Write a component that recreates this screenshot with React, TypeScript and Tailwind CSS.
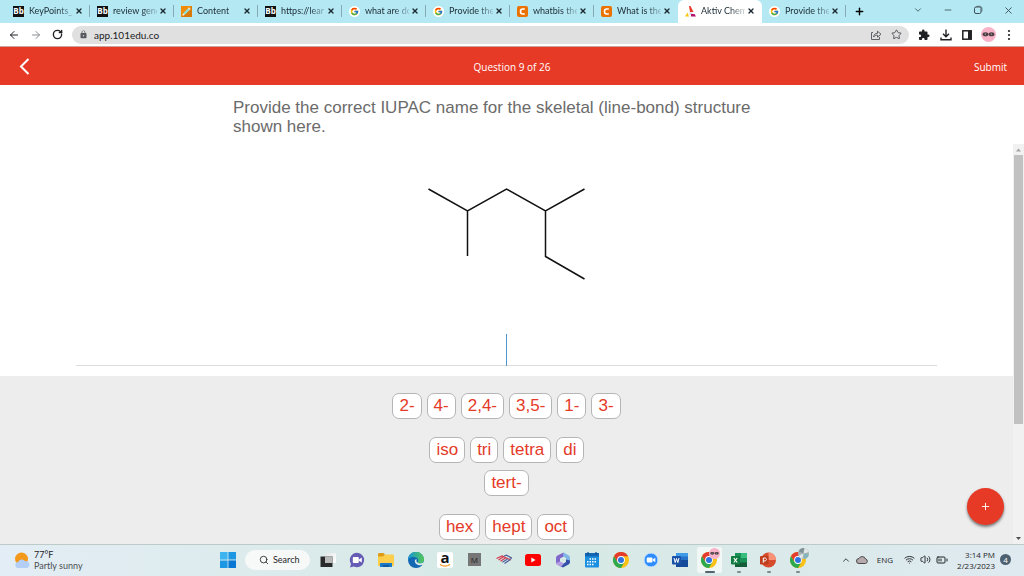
import type { ReactNode } from "react";
import { FcGoogle } from "react-icons/fc";
import { MdExtension, MdLock } from "react-icons/md";
import { ArrowLeft, ArrowRight, BatteryMedium, ChevronDown, ChevronUp, Minus, Plus, RotateCw, Search, Star, Volume2, Wifi, X } from "lucide-react";

const Blackboard = () => (
  <span className="flex size-[11px] shrink-0 items-center justify-center bg-[#111] text-[8px] font-bold text-white">Bb</span>
);

const Google = () => (
  <span className="flex size-[11px] shrink-0 items-center justify-center rounded-full bg-white">
    <FcGoogle size={9} />
  </span>
);

const Pencil = () => (
  <svg viewBox="0 0 11 11" className="size-[11px] shrink-0">
    <rect width="11" height="11" fill="#f08c0a" />
    <path d="M0 11 11 0v11z" fill="#d97b08" />
    <path d="M3 8 8 3" stroke="#8fe0dc" strokeWidth="2.4" />
    <path d="m7.4 1.800 1.800 1.800" stroke="#f7e3c0" strokeWidth="1.6" />
    <path d="M1.5 9.700 2 7.200l1.800 1.800z" fill="#fff" />
  </svg>
);

const Chegg = () => (
  <svg viewBox="0 0 11 11" className="size-[11px] shrink-0">
    <rect width="11" height="11" rx="2" fill="#eb7100" />
    <path d="M7.8 3H5.6C4.3 3 3.5 4 3.5 5.5S4.3 8 5.6 8h2.2" fill="none" stroke="#fff" strokeWidth="1.6" />
  </svg>
);

const Aktiv = () => (
  <svg viewBox="0 0 11 11" className="size-[11px] shrink-0">
    <path d="M4 0h1.500L8.500 6H5z" fill="#e8392b" />
    <path d="M0 10.5 2.500 6.500l1.500 4z" fill="#fbc712" />
    <path d="M4.500 6.500h3V9h-3z" fill="#d9d6ea" />
    <path d="M6 8h3.500l1.500 2.500H6z" fill="#b5126b" />
  </svg>
);

const tabs = [
  { title: "KeyPoints_C", icon: <Blackboard /> },
  { title: "review gene", icon: <Blackboard /> },
  { title: "Content", icon: <Pencil /> },
  { title: "https://lear", icon: <Blackboard /> },
  { title: "what are do", icon: <Google /> },
  { title: "Provide the", icon: <Google /> },
  { title: "whatbis the", icon: <Chegg /> },
  { title: "What is the", icon: <Chegg /> },
  { title: "Aktiv Chem", icon: <Aktiv />, active: true },
  { title: "Provide the", icon: <Google /> },
];

const groups = [
  ["2-", "4-", "2,4-", "3,5-", "1-", "3-"],
  ["iso", "tri", "tetra", "di", "tert-"],
  ["hex", "hept", "oct"],
];

function TabStrip() {
  return (
    <div className="flex h-[23px] items-stretch bg-[#b4e8f3] pl-[6px]">
      {tabs.map((tab, i) => (
        <div
          key={i}
          className={
            tab.active
              ? "flex w-[84px] items-center rounded-t-md bg-white pb-px pl-[7px]"
              : "flex w-[84px] items-center pb-px pl-[7px]"
          }
        >
          {tab.icon}
          <span className="ml-[5px] w-[44px] whitespace-nowrap font-['Lato','Open_Sans',sans-serif] text-[9px] text-[#20303a] [mask-image:linear-gradient(to_right,#000_65%,#0003)]">
            {tab.title}
          </span>
          <button aria-label="Close tab" className="ml-[2px] text-[#1b2a30]">
            <X size={8} strokeWidth={4} />
          </button>
          {!tab.active && i !== 7 && <span className="ml-auto h-3 w-px bg-[#86a9b3]" />}
        </div>
      ))}
      <button aria-label="New tab" className="ml-[8px]">
        <Plus size={11} strokeWidth={3} />
      </button>
      <div className="ml-auto flex items-center gap-[20px] pr-[10px] pb-[3px] text-[#3c4f56]">
        <button aria-label="Search tabs"><ChevronDown size={10} /></button>
        <button aria-label="Minimize"><Minus size={10} strokeWidth={2} /></button>
        <button aria-label="Restore">
          <svg viewBox="0 0 10 10" className="size-[10px]" fill="none" stroke="currentColor">
            <rect x="1.500" y="2" width="6.500" height="6.500" rx="1.500" />
            <path d="M3.500 1.300h3.200c1.400 0 2.200.8 2.200 2.200v3" strokeWidth=".7" />
          </svg>
        </button>
        <button aria-label="Close"><X size={11} strokeWidth={2} /></button>
      </div>
    </div>
  );
}

function Toolbar() {
  return (
    <div className="flex h-6 items-center border-b border-[#c9a39e] bg-white pr-[13px] pl-[8px] text-[#202124]">
      <button aria-label="Back"><ArrowLeft size={12} /></button>
      <button aria-label="Forward" className="ml-[10px] text-[#8a8d91]"><ArrowRight size={12} /></button>
      <button aria-label="Reload" className="ml-[10px]"><RotateCw size={11} strokeWidth={3} /></button>
      <div className="ml-[9px] flex h-[18px] flex-1 items-center rounded-full bg-[#e0e0e0] px-[7px]">
        <MdLock size={9} className="text-[#55585c]" />
        <input
          aria-label="Address"
          defaultValue="app.101edu.co"
          className="ml-[6px] min-w-0 flex-1 bg-transparent font-['Lato','Open_Sans',sans-serif] text-[10px] leading-[14px] outline-none"
        />
        <button aria-label="Share">
          <svg viewBox="0 0 12 12" className="size-3" fill="none" stroke="#5f6368">
            <path d="M3 3.500H1.500v7h8V8" />
            <path d="M3.500 8c.3-2.600 2-3.700 4-3.700V2.200l3.500 3-3.500 3V6.200c-1.700 0-3 .4-4 1.800z" />
          </svg>
        </button>
        <button aria-label="Bookmark" className="ml-[9px]"><Star size={11} color="#4a4d51" /></button>
      </div>
      <button aria-label="Extensions" className="ml-[9px]"><MdExtension size={12} /></button>
      <button aria-label="Downloads" className="ml-[10px]">
        <svg viewBox="0 0 12 12" className="size-3" fill="none" stroke="currentColor" strokeWidth="1.4">
          <path d="M6 .5v7M3 4.800 6 7.800 9 4.800M1 8.500v2.300h10V8.500" />
        </svg>
      </button>
      <button aria-label="Side panel" className="ml-[10px]">
        <svg viewBox="0 0 10 10" className="size-[10px]">
          <rect x=".8" y=".8" width="8.400" height="8.400" fill="none" stroke="currentColor" strokeWidth="1.500" />
          <path d="M6 1h3.500v8H6z" fill="currentColor" />
        </svg>
      </button>
      <button aria-label="Profile" className="ml-[9px]"><Avatar className="size-[15px]" /></button>
      <button aria-label="Menu" className="ml-[11px]">
        <svg viewBox="0 0 4 12" className="h-3 w-1" fill="currentColor">
          <circle cx="2" cy="2" r="1.100" />
          <circle cx="2" cy="6" r="1.100" />
          <circle cx="2" cy="10" r="1.100" />
        </svg>
      </button>
    </div>
  );
}

const Avatar = ({ className }: { className: string }) => (
  <svg viewBox="0 0 15 15" className={className}>
    <circle cx="7.500" cy="7.500" r="7.500" fill="#f8b3c9" />
    <ellipse cx="4.500" cy="7.300" rx="2.900" ry="2" fill="#4d4045" />
    <ellipse cx="10.500" cy="7.300" rx="2.900" ry="2" fill="#4d4045" />
    <circle cx="4.300" cy="7" r=".6" fill="#ddd" />
    <circle cx="10.300" cy="7" r=".6" fill="#ddd" />
  </svg>
);

function Molecule() {
  return (
    <svg viewBox="0 0 158 92" className="mx-auto h-[92px] w-[158px]" fill="none" stroke="#111" strokeWidth="1.500">
      <path d="M.5 1 39.500 23 78.500 1 117.500 23 156.500 1M39.500 23v45M117.500 23v45.500l39 22.500" />
    </svg>
  );
}

function Question() {
  return (
    <div className="flex min-h-0 flex-1 flex-col bg-white">
      <p className="mx-auto h-[59px] w-full max-w-[558px] shrink-0 pt-[13px] text-[17px] leading-[19px] text-[#6b6b6b]">
        Provide the correct IUPAC name for the skeletal (line-bond) structure shown here.
      </p>
      <div className="flex min-h-0 flex-1">
        <main className="flex min-w-0 flex-1 flex-col overflow-hidden">
          <div className="pt-[44px]">
            <Molecule />
          </div>
          <div className="relative mx-[76px] mt-[54px] mb-[10px] flex justify-center">
            <input aria-label="Answer" className="block h-8 w-full border-b border-[#dcdcdc] text-center outline-none" />
            <span className="absolute bottom-0 h-8 w-px bg-[#4f96cc]" />
          </div>
          <div className="flex flex-1 flex-col items-center gap-[18px] bg-[#ededed] pt-[17px]">
            {groups.map((group, i) => (
              <div key={i} className={i === 1 ? "flex max-w-[190px] flex-wrap justify-center gap-x-[5px] gap-y-[7px]" : "flex gap-[5px]"}>
                {group.map((part) => (
                  <button
                    key={part}
                    className="h-[26px] rounded-[7px] border border-[#b5b5b5] bg-white px-[6px] text-[17px] leading-[24px] text-[#e43a27]"
                  >
                    {part}
                  </button>
                ))}
              </div>
            ))}
          </div>
        </main>
        <div className="flex w-[11px] flex-col items-center bg-[#f1f1f1]">
          <svg viewBox="0 0 11 11" className="size-[11px] shrink-0" fill="#a3a3a3"><path d="m5.500 4.500 2.500 3H3z" /></svg>
          <div className="h-[269px] w-[9px] bg-[#c1c1c1]" />
          <svg viewBox="0 0 11 11" className="mt-auto size-[11px] shrink-0" fill="#505050"><path d="M5.500 7 8 4H3z" /></svg>
        </div>
      </div>
    </div>
  );
}

const Chrome = ({ className = "size-4" }: { className?: string }) => (
  <svg viewBox="0 0 16 16" className={className}>
    <circle cx="8" cy="8" r="8" fill="#fbc116" />
    <path d="M1.070 4A8 8 0 0 0 8 16l3.500-6L8 8 4.600 10z" fill="#2da94f" />
    <path d="M8 4.200h7.100L14.930 4A8 8 0 0 0 1.070 4l3.600 6z" fill="#e33b2e" />
    <circle cx="8" cy="8" r="3.900" fill="#fff" />
    <circle cx="8" cy="8" r="3" fill="#2f73e0" />
  </svg>
);

const TaskView = () => (
  <svg viewBox="0 0 16 16" className="size-4">
    <defs>
      <linearGradient id="tvBack" x2="1" y2="1">
        <stop stopColor="#e4e7e6" />
        <stop offset="1" stopColor="#fff" />
      </linearGradient>
    </defs>
    <path d="M5 1h11v10H5z" fill="url(#tvBack)" />
    <path d="M.5 4.500h12V15H.5z" fill="#2a2a2a" />
    <path d="M5 4.500h7.500V11H5z" fill="#b9bbba" />
  </svg>
);

const Chat = () => (
  <svg viewBox="0 0 16 16" className="size-4">
    <path d="M8 .8a7.200 7.200 0 1 1-3.200 13.700L1 15.500l1-3.600A7.200 7.200 0 0 1 8 .8z" fill="#665cb5" />
    <rect x="3.800" y="5" width="6" height="6" rx="1" fill="#fff" />
    <path d="m10 7.500 2.800-1.900v4.800L10 8.800z" fill="#fff" />
  </svg>
);

const Folder = () => (
  <svg viewBox="0 0 16 16" className="size-4">
    <path d="M0 2.500C0 1.500.5 1 1.500 1h4L7 2.500 5.500 5H0z" fill="#dc9c17" />
    <path d="M0 4.500h5L7 2.500h7.500c1 0 1.500.5 1.500 1.500v10H0z" fill="#fbcf4c" />
    <path d="M2 15v-3c0-.6.400-1 1-1h10c.600 0 1 .4 1 1v3z" fill="#1978c9" />
    <path d="M5 13h6v2H5z" fill="#115a9e" />
  </svg>
);

const Edge = () => (
  <svg viewBox="0 0 16 16" className="size-4">
    <defs>
      <linearGradient id="edgeTop" x2="1">
        <stop stopColor="#1795d5" />
        <stop offset="1" stopColor="#54c957" />
      </linearGradient>
    </defs>
    <circle cx="8" cy="8" r="8" fill="#1268b3" />
    <path d="M0 8a8 8 0 0 1 16-.5c0 2.500-1.800 4-4 4-1.500 0-2.500-.5-2.500-1.200 0-.4.700-.9.700-1.900C10.200 6 8 5 5.500 5 2.500 5 .5 6.500 0 8z" fill="url(#edgeTop)" />
    <path d="M7 7.800c-.8 3 1.500 5.500 5 5.500 1.200 0 2.300-.3 3.200-1-.3.700-.7 1.200-1.200 1.700l2-3v-1c-1.500 1.600-5.500 2-7 .3-.8-.9-.7-2 0-3z" fill="#dcebe8" />
  </svg>
);

const Amazon = () => (
  <span className="flex size-4 flex-col items-center rounded-xs bg-white font-bold">
    <span className="h-3 text-[15px] leading-[10px] text-[#111]">a</span>
    <svg viewBox="0 0 12 3" className="h-[3px] w-3" fill="none" stroke="#f79b1e" strokeWidth="1.300">
      <path d="M1 .5c3 2 7 2 10 0" />
    </svg>
  </span>
);

const Letter = () => (
  <span className="flex size-4 items-center justify-center">
    <span className="flex size-[13px] items-center justify-center bg-[#767676] text-[8px] text-[#222]">M</span>
  </span>
);

const Bank = () => (
  <svg viewBox="0 0 16 16" className="size-4" fill="none" strokeWidth="1.200">
    <path d="M.5 6.500 6 4l9 4" stroke="#d23b50" />
    <path d="m2.500 8 5-3.300M4.500 9.200l5-3.300" stroke="#d23b50" />
    <path d="m6.500 10.300 5-3.300M8.500 11.500l5.500-3.700" stroke="#4d5f9c" />
    <path d="m8 4 2.500-.8 5 2.800-1.500 1" stroke="#4d5f9c" />
  </svg>
);

const YouTube = () => (
  <svg viewBox="0 0 16 12" className="h-3 w-4">
    <rect width="16" height="12" rx="2.500" fill="#f00" />
    <path d="m6.300 3.500 4.200 2.500-4.200 2.500z" fill="#fff" />
  </svg>
);

const Office = () => (
  <svg viewBox="0 0 16 16" className="size-4">
    <path d="M8.500.500 2.500 3.500C1.500 4 1 5 1 6v5.500l4-1.500V6.500L9.500 4z" fill="#7f68c9" />
    <path d="M8.500.500 13 3c1.300.7 2 1.700 2 3v4l-4-1V6L8 4.300z" fill="#7fb6e6" />
    <path d="M15 9.500c0 1.500-.5 2.500-2 3.300L8 15.500l-3-1.500 6-4V7.500l4 1z" fill="#344fa8" />
    <path d="M1 11 5 9.500l4 2L6 15l-3.500-2C1.500 12.500 1 12 1 11z" fill="#b39be2" />
  </svg>
);

const Calendar = () => (
  <svg viewBox="0 0 16 16" className="size-4">
    <rect x="1" y="1" width="14" height="14.500" rx="1" fill="#1b8fe0" />
    <path d="M1 1h14v3.500H1z" fill="#1267b5" />
    <path d="M4 0v2.500M12 0v2.500" stroke="#0b4b8c" strokeWidth="1.200" />
    <path d="M5.500 7H13M3 9.700h10M3 12.400h7.500" stroke="#fff" strokeWidth="1.500" strokeDasharray="1.500 1" />
  </svg>
);

const Zoom = () => (
  <svg viewBox="0 0 16 16" className="size-4">
    <circle cx="8" cy="8" r="7" fill="#2d8cff" />
    <circle cx="8" cy="8" r="7" fill="none" stroke="#cfe5fc" />
    <rect x="3.700" y="5.500" width="5.800" height="5" rx="1" fill="#fff" />
    <path d="m10 7.300 2.300-1.600v4.600L10 8.700z" fill="#fff" />
  </svg>
);

const Word = () => (
  <svg viewBox="0 0 16 16" className="size-4">
    <path d="M4 1h12v4.500H4z" fill="#3d9be8" />
    <path d="M4 4.500h12v4H4z" fill="#2672c9" />
    <path d="M4 8h12v7H4z" fill="#154a9b" />
    <rect y="4" width="9" height="8.500" rx="1" fill="#1950a8" />
    <path d="m2 6 1.200 4.500L4.500 6.500l1.300 4L7 6" stroke="#fff" fill="none" />
  </svg>
);

const Excel = () => (
  <svg viewBox="0 0 16 16" className="size-4">
    <path d="M4 1h12v14H4z" fill="#189256" />
    <path d="M10 1h6v5h-6z" fill="#37bd7d" />
    <path d="M4 10.500h12V15H4z" fill="#145c37" />
    <rect y="4" width="9" height="8.500" rx="1" fill="#107c41" />
    <path d="m2.800 6 3.400 4.500M6.200 6l-3.400 4.500" stroke="#fff" strokeWidth="1.200" />
  </svg>
);

const PowerPoint = () => (
  <svg viewBox="0 0 16 16" className="size-4">
    <circle cx="8.500" cy="8" r="7.500" fill="#d64b2c" />
    <path d="M8.500.5A7.500 7.500 0 0 1 16 8H8.500z" fill="#f79277" />
    <rect y="4" width="8.500" height="8.500" rx="1" fill="#bf3c1c" />
    <path d="M3.300 10.800V6h1.500c2.200 0 2.200 2.900 0 2.900H3.500" stroke="#fff" fill="none" />
  </svg>
);

const ChromeProfile = () => (
  <span className="relative size-4">
    <Chrome />
    <Avatar className="absolute -top-1 -right-[3px] size-[11px]" />
  </span>
);

const ChromeDisc = () => (
  <span className="relative size-4">
    <Chrome />
    <svg viewBox="0 0 10 10" className="absolute -top-1 -right-[3px] size-[11px]">
      <circle cx="5" cy="5" r="5" fill="#a9b4b6" />
      <path d="M5 5 .5 3A5 5 0 0 1 5.500 0z" fill="#7f9296" />
      <path d="M5 5 6 .2a5 5 0 0 1 3.800 3.500z" fill="#e3e8e6" />
      <path d="m5 5 4.800 1A5 5 0 0 1 6 9.800z" fill="#7fb5bb" />
      <path d="M5 5 4 9.800A5 5 0 0 1 .5 7z" fill="#e3e8e6" />
    </svg>
  </span>
);

const apps: { name: string; icon: ReactNode; state?: "open" | "active" }[] = [
  { name: "Task view", icon: <TaskView /> },
  { name: "Chat", icon: <Chat /> },
  { name: "File Explorer", icon: <Folder /> },
  { name: "Edge", icon: <Edge /> },
  { name: "Amazon", icon: <Amazon /> },
  { name: "App", icon: <Letter /> },
  { name: "Bank", icon: <Bank /> },
  { name: "YouTube", icon: <YouTube /> },
  { name: "Microsoft 365", icon: <Office /> },
  { name: "Calendar", icon: <Calendar /> },
  { name: "Chrome", icon: <Chrome /> },
  { name: "Zoom", icon: <Zoom /> },
  { name: "Word", icon: <Word /> },
  { name: "Chrome profile", icon: <ChromeProfile />, state: "active" },
  { name: "Excel", icon: <Excel />, state: "open" },
  { name: "PowerPoint", icon: <PowerPoint />, state: "open" },
  { name: "Chrome second profile", icon: <ChromeDisc />, state: "open" },
];

function Taskbar() {
  return (
    <footer className="grid h-8 shrink-0 grid-cols-[1fr_auto_1fr] items-center border-t border-[#bccaca] bg-linear-to-r from-[#e3edf5] via-[#d6e9e4] to-[#dfeaf0] pb-[2px] pl-[6px] text-[8px] leading-[11px] text-[#1f2426]">
      <div className="flex items-center gap-[4px] pl-[8px] font-['Lato','Open_Sans',sans-serif] text-[9px]">
        <svg viewBox="0 0 16 16" className="size-4">
          <circle cx="7.500" cy="7" r="6.500" fill="#f39a1d" />
          <path d="M4.500 16a3 3 0 0 1-.3-6 4 4 0 0 1 7-.8A3.400 3.400 0 0 1 12.500 16z" fill="#b4cff5" />
        </svg>
        <div>
          <div>77°F</div>
          <div className="text-[#4b5052]">Partly sunny</div>
        </div>
      </div>
      <div className="flex items-center">
        <button aria-label="Start">
          <svg viewBox="0 0 16 16" className="size-4">
            <path d="M0 0h7.600v7.600H0z" fill="#3cb4f0" />
            <path d="M8.400 0H16v7.600H8.400zM0 8.400h7.600V16H0z" fill="#1c97e4" />
            <path d="M8.400 8.400H16V16H8.400z" fill="#0878d4" />
          </svg>
        </button>
        <button className="ml-[9px] flex h-5 w-[65px] items-center gap-1 rounded-full bg-[#f7f9f9] pl-[14px] font-['Lato','Open_Sans',sans-serif] text-[9px]">
          <Search size={10} />
          Search
        </button>
        <div className="ml-[5px] flex w-[495px] justify-between">
          {apps.map((app) => (
            <button
              key={app.name}
              aria-label={app.name}
              className={
                app.state === "active"
                  ? "relative flex h-[26px] w-[25px] items-center justify-center rounded-xs bg-[#f1f7f5]"
                  : "relative flex h-[26px] w-[25px] items-center justify-center"
              }
            >
              {app.icon}
              {app.state === "active" && <span className="absolute bottom-0 left-2 h-[2px] w-[10px] rounded-full bg-[#52656e]" />}
              {app.state === "open" && <span className="absolute bottom-0 left-[11px] h-[2px] w-1 rounded-full bg-[#7d898d]" />}
            </button>
          ))}
        </div>
      </div>
      <div className="flex items-center justify-end pr-[13px]">
        <ChevronUp size={10} />
        <svg viewBox="0 0 12 10" className="ml-[5px] h-[10px] w-3">
          <path d="M3 8.500a2.500 2.500 0 0 1 0-5 3.500 3.500 0 0 1 6.500.5 2.300 2.300 0 0 1 0 4.500z" fill="#b5aaac" stroke="#4c4648" />
        </svg>
        <span className="ml-[9px]">ENG</span>
        <Wifi size={11} className="ml-[11px]" />
        <Volume2 size={11} className="ml-[5px]" />
        <BatteryMedium size={12} className="ml-[5px]" />
        <div className="ml-[9px] text-right">
          <div>3:14 PM</div>
          <div>2/23/2023</div>
        </div>
        <span className="ml-[5px] flex size-[11px] items-center justify-center rounded-full bg-[#4d6070] text-[8px] text-white">4</span>
      </div>
    </footer>
  );
}

export default function App() {
  return (
    <div className="relative flex h-screen flex-col overflow-hidden font-['Open_Sans','Noto_Sans',sans-serif]">
      <TabStrip />
      <Toolbar />
      <header className="grid h-[38px] shrink-0 grid-cols-3 items-center bg-[#e63a26] px-[17px] pt-[2px] text-[10px] text-white">
        <button aria-label="Back to questions" className="justify-self-start">
          <svg viewBox="0 0 14 18" className="h-[18px] w-[14px]" fill="none" stroke="currentColor" strokeWidth="2">
            <path d="M11.500 1 4 8.500l7.500 7.500" />
          </svg>
        </button>
        <h1 className="text-center">Question 9 of 26</h1>
        <button className="justify-self-end">Submit</button>
      </header>
      <div className="flex min-h-0 flex-1 flex-col font-['Liberation_Sans',Arial,sans-serif]">
        <Question />
      </div>
      <button aria-label="Add" className="absolute right-5 bottom-[51px] flex size-[37px] items-center justify-center rounded-full bg-[#e63a26] text-white shadow-[0_2px_3px_rgba(0,0,0,0.5)]">
        <Plus size={11} strokeWidth={2} />
      </button>
      <Taskbar />
    </div>
  );
}
